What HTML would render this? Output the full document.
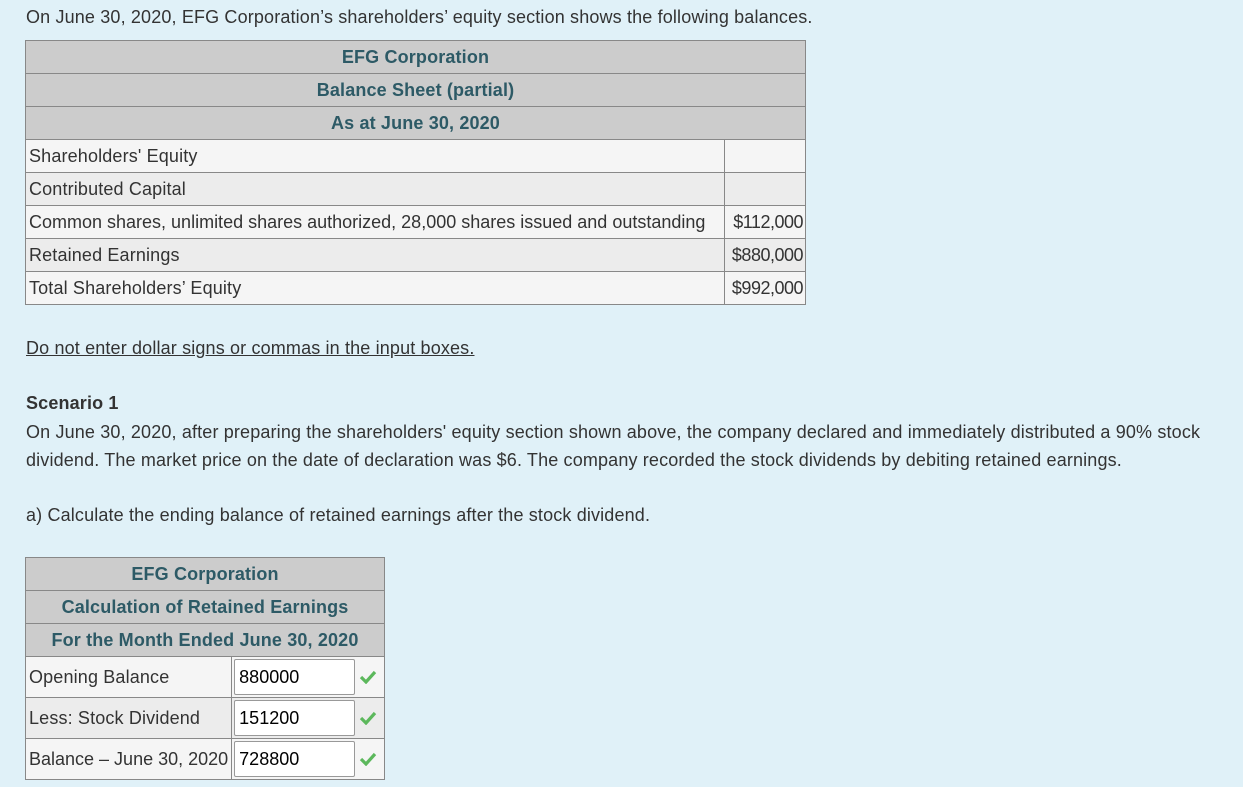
<!DOCTYPE html>
<html><head><style>
body{margin:0;background:#e0f1f8;font-family:"Liberation Sans",sans-serif;font-size:18px;color:#333;width:1243px;height:787px;overflow:hidden;position:relative;letter-spacing:0.15px}
.a{position:absolute;white-space:nowrap}
table{position:absolute;border-collapse:collapse;border:1px solid #333}
td{padding:0 3px;border:1px solid #888;height:33px;box-sizing:border-box;white-space:nowrap;line-height:20px}
th{background:#ccc;color:#2d5a66;font-weight:bold;height:33px;box-sizing:border-box;padding:0;line-height:20px;border:1px solid #888;text-align:center}
.r1 td{background:#f5f5f5}.r2 td{background:#ececec}
.num{text-align:right;padding:0 2px}
input{width:121px;height:36px;box-sizing:border-box;border:1px solid #999;border-radius:2px;font:18px "Liberation Sans",sans-serif;padding:0 4px;background:#fff;color:#000;vertical-align:middle}
svg{vertical-align:middle;margin-left:4px}
</style></head><body>
<div class="a" style="left:26px;top:7px">On June 30, 2020, EFG Corporation’s shareholders’ equity section shows the following balances.</div>
<table style="left:25px;top:40px;width:781px">
<tr><th colspan="2">EFG Corporation</th></tr>
<tr><th colspan="2">Balance Sheet (partial)</th></tr>
<tr><th colspan="2">As at June 30, 2020</th></tr>
<tr class="r1"><td style="width:699px">Shareholders' Equity</td><td></td></tr>
<tr class="r2"><td>Contributed Capital</td><td></td></tr>
<tr class="r1"><td style="letter-spacing:0">Common shares, unlimited shares authorized, 28,000 shares issued and outstanding</td><td class="num" style="letter-spacing:-0.5px">$112,000</td></tr>
<tr class="r2"><td>Retained Earnings</td><td class="num" style="letter-spacing:-0.5px">$880,000</td></tr>
<tr class="r1"><td>Total Shareholders’ Equity</td><td class="num" style="letter-spacing:-0.5px">$992,000</td></tr>
</table>
<div class="a" style="left:26px;top:338px;text-decoration:underline">Do not enter dollar signs or commas in the input boxes.</div>
<div class="a" style="left:26px;top:393px;font-weight:bold">Scenario 1</div>
<div class="a" style="left:26px;top:418px;line-height:28px">On June 30, 2020, after preparing the shareholders' equity section shown above, the company declared and immediately distributed a 90% stock<br>dividend. The market price on the date of declaration was $6. The company recorded the stock dividends by debiting retained earnings.</div>
<div class="a" style="left:26px;top:505px">a) Calculate the ending balance of retained earnings after the stock dividend.</div>
<table style="left:25px;top:557px;width:360px">
<tr><th colspan="2">EFG Corporation</th></tr>
<tr><th colspan="2">Calculation of Retained Earnings</th></tr>
<tr><th colspan="2">For the Month Ended June 30, 2020</th></tr>
<tr class="r1"><td style="height:41px;width:203px">Opening Balance</td><td style="padding:0 2px"><input value="880000"><svg width="18" height="14" viewBox="0 0 18 14"><path d="M2 7l5 5 9-10" fill="none" stroke="#5cb85c" stroke-width="3.2"/></svg></td></tr>
<tr class="r2"><td style="height:41px">Less: Stock Dividend</td><td style="padding:0 2px"><input value="151200"><svg width="18" height="14" viewBox="0 0 18 14"><path d="M2 7l5 5 9-10" fill="none" stroke="#5cb85c" stroke-width="3.2"/></svg></td></tr>
<tr class="r1"><td style="height:41px;letter-spacing:0">Balance – June 30, 2020</td><td style="padding:0 2px"><input value="728800"><svg width="18" height="14" viewBox="0 0 18 14"><path d="M2 7l5 5 9-10" fill="none" stroke="#5cb85c" stroke-width="3.2"/></svg></td></tr>
</table>
</body></html>
